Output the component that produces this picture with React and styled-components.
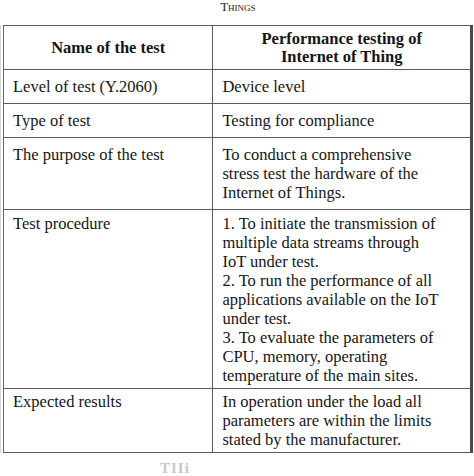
import React from 'react';
import styled, { createGlobalStyle } from 'styled-components';

const serif = `"Liberation Serif", "Times New Roman", "DejaVu Serif", serif`;

const GlobalStyle = createGlobalStyle`
  html, body {
    margin: 0;
    padding: 0;
    background: #ffffff;
  }
  body {
    font-family: ${serif};
    color: #161616;
    overflow: hidden;
  }
`;

const Page = styled.div`
  width: 474px;
  height: 476px;
  position: relative;
  overflow: hidden;
  display: flex;
  flex-direction: column;
  align-items: stretch;
`;

const Caption = styled.div`
  height: 25px;
  text-align: center;
  font-family: ${serif};
  font-size: 12.5px;
  font-variant: small-caps;
  line-height: 14px;
  padding-left: 2px;
  color: #222;
`;

const Frame = styled.div`
  padding-left: 2px;
  border-left: 1px solid #d8d8d8;
  width: 470px;
`;

const Table = styled.table`
  width: 470px;
  border-collapse: collapse;
  table-layout: fixed;
  font-family: ${serif};
  color: #161616;
  border-left: 1px solid #6a6a6a;
  border-right: 3px solid #4a4a4a;
`;

const Col = styled.col`
  width: ${(p) => p.$w}px;
`;

const Head = styled.th`
  font-family: ${serif};
  font-weight: bold;
  font-size: 16.5px;
  line-height: 18px;
  text-align: center;
  vertical-align: middle;
  padding: 4px 6px 3px;
  border-top: 1.5px solid #5a5a5a;
  border-bottom: 1.5px solid #5a5a5a;
  border-left: 1.5px solid #5a5a5a;
  &:first-child {
    border-left: none;
  }
`;

const Cell = styled.td`
  font-family: ${serif};
  font-size: 16.5px;
  line-height: 19px;
  text-align: left;
  vertical-align: top;
  padding: ${(p) => p.$pad || '7px 8px 7px 9px'};
  border-bottom: 1.5px solid #5a5a5a;
  border-left: 1.5px solid #5a5a5a;
  &:first-child {
    border-left: none;
  }
`;

const Line = styled.div`
  white-space: nowrap;
`;

const Footer = styled.div`
  margin-top: 9px;
  padding-left: 160px;
  font-family: ${serif};
  font-size: 15px;
  font-weight: bold;
  color: #c9c9c9;
  letter-spacing: 1px;
  line-height: 12px;
`;

const rows = [
  { name: 'Level of test (Y.2060)', lines: ['Device level'] },
  { name: 'Type of test', lines: ['Testing for compliance'] },
  {
    name: 'The purpose of the test',
    lines: ['To conduct a comprehensive', 'stress test the hardware of the', 'Internet of Things.'],
  },
  {
    name: 'Test procedure',
    pad: '4px 8px 3px 9px',
    lines: [
      '1. To initiate the transmission of',
      'multiple data streams through',
      'IoT under test.',
      '2. To run the performance of all',
      'applications available on the IoT',
      'under test.',
      '3. To evaluate the parameters of',
      'CPU, memory, operating',
      'temperature of the main sites.',
    ],
  },
  {
    name: 'Expected results',
    pad: '3px 8px 3px 9px',
    lines: ['In operation under the load all', 'parameters are within the limits', 'stated by the manufacturer.'],
  },
];

export default function App() {
  return (
    <>
      <GlobalStyle />
      <Page>
        <Caption>Things</Caption>
        <Frame>
          <Table>
            <colgroup>
              <Col $w={209} />
              <Col $w={258} />
            </colgroup>
            <thead>
              <tr>
                <Head>Name of the test</Head>
                <Head>
                  Performance testing of
                  <br />
                  Internet of Thing
                </Head>
              </tr>
            </thead>
            <tbody>
              {rows.map((r) => (
                <tr key={r.name}>
                  <Cell $pad={r.pad}>{r.name}</Cell>
                  <Cell $pad={r.pad}>
                    {r.lines.map((l) => (
                      <Line key={l}>{l}</Line>
                    ))}
                  </Cell>
                </tr>
              ))}
            </tbody>
          </Table>
        </Frame>
        <Footer>TIIi</Footer>
      </Page>
    </>
  );
}
